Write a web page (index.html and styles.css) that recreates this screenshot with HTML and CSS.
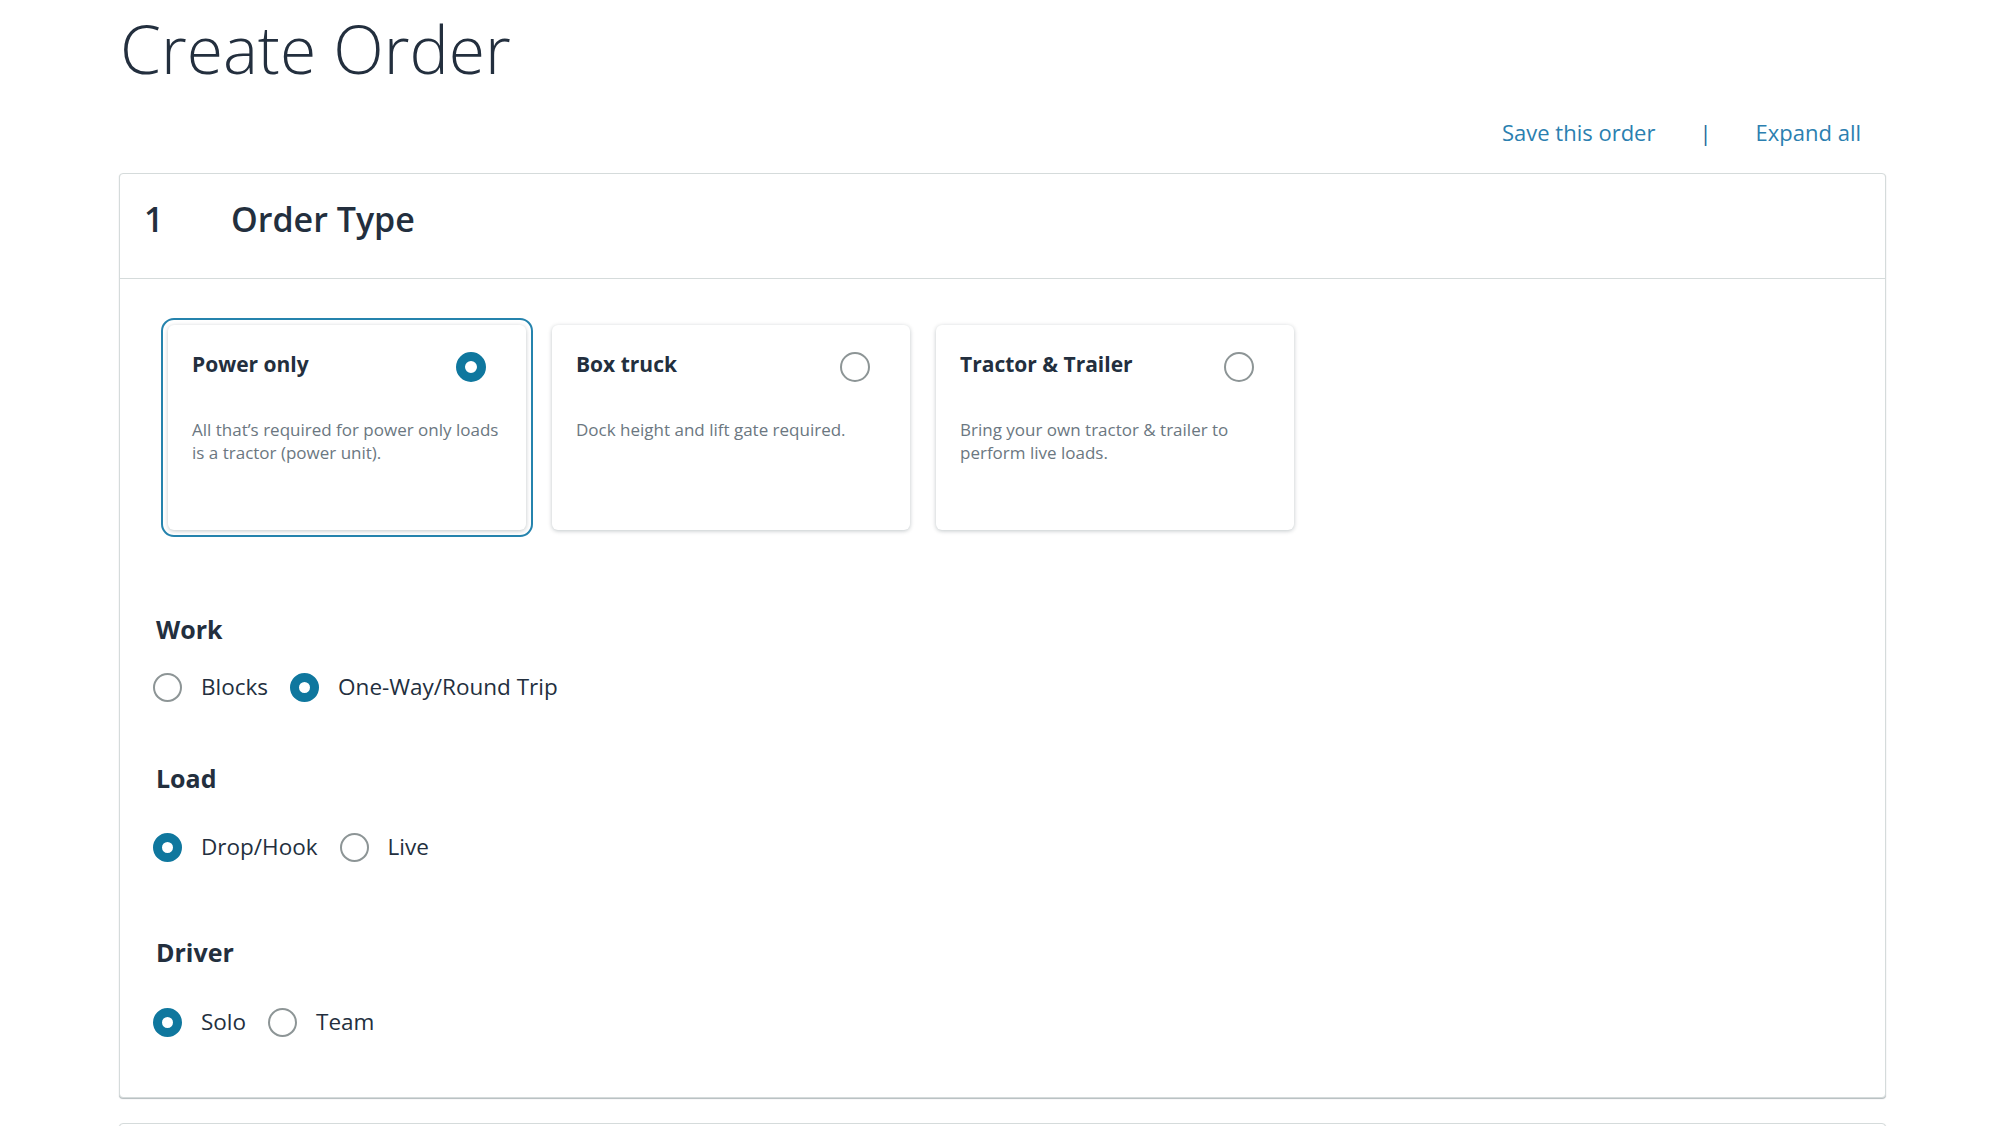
FILE: index.html
```html
<!DOCTYPE html>
<html lang="en">
<head>
    <meta charset="UTF-8">
    <meta name="viewport" content="width=device-width, initial-scale=1.0">
    <title>Create Order</title>
    <link rel="stylesheet" href="styles.css">
</head>
<body>
    <div class="page">
        <h1 class="page-title">Create Order</h1>

        <div class="page-actions">
            <a href="#" class="action-link">Save this order</a>
            <span class="action-sep">|</span>
            <a href="#" class="action-link">Expand all</a>
        </div>

        <div class="panel">
            <div class="panel-header">
                <span class="step-num">1</span>
                <span class="step-title">Order Type</span>
            </div>

            <div class="panel-body">
                <div class="type-cards">
                    <div class="type-card selected">
                        <div class="type-card-top">
                            <div class="type-card-title">Power only</div>
                            <span class="radio checked"></span>
                        </div>
                        <div class="type-card-desc">All that’s required for power only loads is a tractor (power unit).</div>
                    </div>
                    <div class="type-card">
                        <div class="type-card-top">
                            <div class="type-card-title">Box truck</div>
                            <span class="radio"></span>
                        </div>
                        <div class="type-card-desc">Dock height and lift gate required.</div>
                    </div>
                    <div class="type-card">
                        <div class="type-card-top">
                            <div class="type-card-title">Tractor &amp; Trailer</div>
                            <span class="radio"></span>
                        </div>
                        <div class="type-card-desc">Bring your own tractor &amp; trailer to perform live loads.</div>
                    </div>
                </div>

                <div class="field field-work">
                    <div class="field-label">Work</div>
                    <div class="options">
                        <label class="option"><span class="radio"></span>Blocks</label>
                        <label class="option"><span class="radio checked"></span>One-Way/Round Trip</label>
                    </div>
                </div>

                <div class="field field-load">
                    <div class="field-label">Load</div>
                    <div class="options">
                        <label class="option"><span class="radio checked"></span>Drop/Hook</label>
                        <label class="option"><span class="radio"></span>Live</label>
                    </div>
                </div>

                <div class="field field-driver">
                    <div class="field-label">Driver</div>
                    <div class="options">
                        <label class="option"><span class="radio checked"></span>Solo</label>
                        <label class="option"><span class="radio"></span>Team</label>
                    </div>
                </div>
            </div>
        </div>

        <!-- next step panel, only its top edge is on screen -->
        <div class="panel panel-next"></div>
    </div>
</body>
</html>
```

FILE: styles.css
```css
* {
    margin: 0;
    padding: 0;
    box-sizing: border-box;
}

body {
    font-family: 'Open Sans', 'Noto Sans', sans-serif;
    background: #fff;
    color: #232f3e;
    overflow: hidden;
}

.page {
    padding: 0 114px 0 119px;
}

.page-title {
    font-size: 66px;
    font-weight: 300;
    line-height: 96px;
    color: #232f3e;
    padding-left: 1px;
}

.page-actions {
    display: flex;
    justify-content: flex-end;
    align-items: center;
    gap: 44px;
    margin-top: 21px;
    padding-right: 25px;
    height: 30px;
    line-height: 30px;
    font-size: 22px;
}

.action-link {
    color: #2b7fb0;
    text-decoration: none;
}

.action-sep {
    color: #1d6d9c;
}

.panel {
    margin-top: 26px;
    border: 1px solid #d5dbdb;
    border-radius: 4px;
    box-shadow: 0 1px 1px 0 rgba(0, 28, 36, 0.3);
    background: #fff;
}

.panel-header {
    display: flex;
    align-items: baseline;
    padding: 25px 24px 39px 24px;
    border-bottom: 1px solid #d5dbdb;
    line-height: 40px;
    font-size: 34px;
    font-weight: 600;
}

.step-num {
    width: 87px;
}

.panel-body {
    padding: 46px 36px 58px 36px;
}

.type-cards {
    display: flex;
    gap: 26px;
    padding-left: 12px;
}

.type-card {
    width: 358px;
    height: 205px;
    padding: 24px 24px 0 24px;
    border-radius: 6px;
    background: #fff;
    box-shadow: 0 1px 4px rgba(0, 28, 36, 0.25);
}

.type-card.selected {
    outline: 2px solid #2583ad;
    outline-offset: 5px;
}

.type-card-top {
    display: flex;
    justify-content: space-between;
    align-items: center;
    height: 30px;
    line-height: 30px;
}

.type-card-top .radio {
    width: 30px;
    height: 30px;
    margin-right: 16px;
    margin-top: 5px;
}

.type-card-title {
    font-size: 21px;
    font-weight: 700;
}

.type-card-desc {
    margin-top: 39px;
    font-size: 17px;
    line-height: 23px;
    color: #6b7781;
}

.radio {
    display: inline-block;
    flex-shrink: 0;
    width: 29px;
    height: 29px;
    border: 2px solid #8d9596;
    border-radius: 50%;
    background: #fff;
}

.radio.checked {
    border: 9px solid #0f779e;
}

.field-label {
    font-size: 25px;
    font-weight: 700;
    line-height: 34px;
}

.options {
    display: flex;
    align-items: center;
    gap: 22px;
    margin-left: -3px;
    height: 34px;
}

.option {
    display: flex;
    align-items: center;
    gap: 19px;
    font-size: 22.5px;
    line-height: 34px;
    color: #232f3e;
}

.field-work {
    margin-top: 82px;
}

.field-work .options {
    margin-top: 24px;
}

.field-load {
    margin-top: 57px;
}

.field-load .options {
    margin-top: 35px;
}

.field-driver {
    margin-top: 71px;
}

.field-driver .options {
    margin-top: 36px;
}

.panel-next {
    margin-top: 25px;
    height: 200px;
}
```
